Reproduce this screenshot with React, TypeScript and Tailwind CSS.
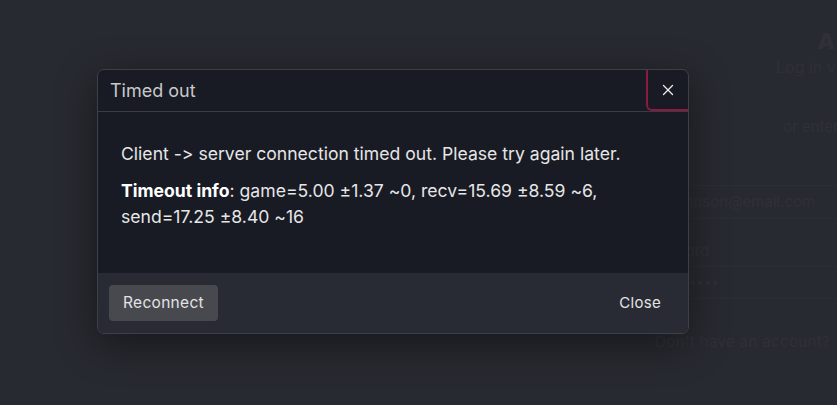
import { X } from "lucide-react";

const font = { fontFamily: "Inter, 'Noto Sans', sans-serif" };

const LoginBackdrop = () => {
  return (
    <div className="flex h-full w-full justify-end overflow-hidden">
      <div className="flex w-[202px] shrink-0 flex-col text-[#31333b]">
        <div className="mt-[30px] flex h-[22px] justify-end pr-[2px]">
          <span className="text-[22px] font-black leading-[22px]">A</span>
        </div>
        <div className="mt-[3px] h-[24px] whitespace-nowrap pl-[141px] text-[16px] leading-[24px]">Log in v</div>
        <div className="mt-[37px] h-[22px] whitespace-nowrap pl-[148px] text-[15px] leading-[22px]">or enter</div>
        <div className="mt-[47px] h-[34px] border-y border-[#2e3038] pl-[37px] text-[15px] leading-[32px] whitespace-nowrap">
          johnson@email.com
        </div>
        <div className="mt-[21px] h-[22px] pl-[5px] text-[15px] leading-[22px]">Password</div>
        <div className="mt-[4px] h-[33px] border-y border-[#2e3038] pl-[55px] text-[11px] leading-[31px] tracking-widest">••••</div>
        <div className="mt-[32px] h-[22px] pl-[20px] whitespace-nowrap text-[15px] leading-[22px] tracking-wide">Don't have an account?</div>
      </div>
    </div>
  );
}

export default function App() {
  return (
    <div className="relative h-[405px] w-full overflow-hidden bg-[#2a2c34] [font-feature-settings:'calt'_0,'liga'_0]" style={font}>
      <LoginBackdrop />
      <div className="absolute inset-0 bg-[#1c1d22]/10">
        <div className="pl-[97px] pt-[69px]">
          <div className="w-[592px] overflow-hidden rounded-[7px] border border-[#3e4048] bg-[#181a24] shadow-[0_10px_40px_rgba(0,0,0,0.45)]">
            <div className="flex h-[42px] items-stretch border-b border-[#3a3c44]">
              <div className="flex flex-1 items-center pl-[12px] text-[18px] text-[#c9c9c9]">Timed out</div>
              <button className="flex w-[42px] items-center justify-center rounded-bl-[6px] border-b-2 border-l-2 border-[#8a1a40] text-[#eeeeee]">
                <X size={18} strokeWidth={1.75} />
              </button>
            </div>
            <div className="h-[161px] px-[23px] pt-[29px] text-[17.6px] leading-[26px] text-[#e6e6e6]">
              <p>Client -&gt; server connection timed out. Please try again later.</p>
              <p className="mt-[11px]">
                <span className="font-bold text-white">Timeout info</span>: game=5.00 ±1.37 ~0, recv=15.69 ±8.59 ~6, send=17.25 ±8.40 ~16
              </p>
            </div>
            <div className="flex h-[60px] items-center justify-between bg-[#292b34] pl-[11px] pr-[27px]">
              <button className="h-[36px] rounded-[4px] bg-[#48494f] px-[14px] text-[15.5px] tracking-[0.3px] text-[#e3e3e3]">
                Reconnect
              </button>
              <button className="text-[15px] tracking-[0.3px] text-[#e3e3e3]">Close</button>
            </div>
          </div>
        </div>
      </div>
    </div>
  );
}
